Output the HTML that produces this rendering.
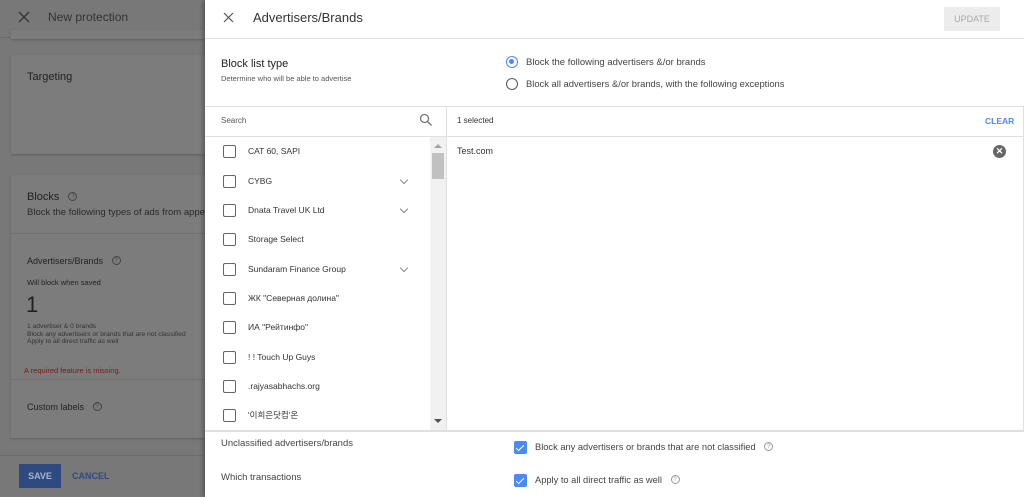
<!DOCTYPE html>
<html><head><meta charset="utf-8"><style>
*{box-sizing:border-box;margin:0;padding:0}
body{width:1024px;height:497px;overflow:hidden;position:relative;font-family:"Liberation Sans","Noto Sans CJK KR",sans-serif;background:#777;color:#222}
.abs{position:absolute}
.bg{left:0;top:0;width:205px;height:497px;background:#787878}
.card{background:#7c7c7c;box-shadow:0 1px 2px #5e5e5e}
.t{position:absolute;white-space:nowrap}
.panel{left:205px;top:0;width:819px;height:497px;background:#fff;box-shadow:-2px 0 4px rgba(0,0,0,.3)}
.hl{position:absolute;height:1px;background:#e0e0e0}
.vl{position:absolute;width:1px;background:#e0e0e0}
.cb{position:absolute;left:18px;width:13px;height:13px;border:1.5px solid #666;border-radius:2px}
.item{position:absolute;left:43px;font-size:8.5px;color:#333}
.chev{position:absolute;left:196px;width:6px;height:6px;border-right:1.2px solid #888;border-bottom:1.2px solid #888;transform:rotate(45deg)}
.bcb{position:absolute;width:13px;height:13px;background:#4a8af4;border-radius:2px}
.bcb:after{content:"";position:absolute;left:4px;top:1.5px;width:3px;height:7px;border-right:1.5px solid #fff;border-bottom:1.5px solid #fff;transform:rotate(45deg)}
.q{display:inline-block;width:9px;height:9px;border:1px solid #999;border-radius:50%;font-size:6px;text-align:center;line-height:8px;color:#999;vertical-align:2px;margin-left:6px}
</style></head><body>
<div class="abs bg"></div>
<svg class="abs" style="left:18px;top:11px" width="12" height="12" viewBox="0 0 12 12"><path d="M1 1L11 11M11 1L1 11" stroke="#333" stroke-width="1.3"/></svg>
<div class="t" style="left:48px;top:10px;font-size:12px;color:#333">New protection</div>
<div class="hl" style="left:0;top:37px;width:205px;background:#6c6c6c"></div>
<div class="abs card" style="left:11px;top:30px;width:194px;height:9px"></div>
<div class="abs card" style="left:11px;top:55px;width:194px;height:99px"></div>
<div class="t" style="left:27px;top:71px;font-size:11px;color:#222">Targeting</div>
<div class="abs card" style="left:11px;top:175px;width:194px;height:263px"></div>
<div class="t" style="left:27px;top:191px;font-size:11px;color:#222">Blocks <span class="q" style="border-color:#444;color:#444">?</span></div>
<div class="t" style="left:27px;top:207px;font-size:9.5px;color:#2a2a2a">Block the following types of ads from appearin</div>
<div class="hl" style="left:11px;top:233px;width:194px;background:#707070"></div>
<div class="t" style="left:27px;top:256px;font-size:9px;color:#222">Advertisers/Brands <span class="q" style="border-color:#444;color:#444">?</span></div>
<div class="t" style="left:27px;top:278px;font-size:7.5px;color:#222">Will block when saved</div>
<div class="t" style="left:26px;top:292px;font-size:22px;color:#222">1</div>
<div class="t" style="left:27px;top:323px;font-size:6.7px;color:#333;line-height:7.7px">1 advertiser &amp; 0 brands<br>Block any advertisers or brands that are not classified<br>Apply to all direct traffic as well</div>
<div class="t" style="left:24px;top:366px;font-size:7.5px;color:#7a1a1a">A required feature is missing.</div>
<div class="hl" style="left:11px;top:379px;width:194px;background:#707070"></div>
<div class="t" style="left:27px;top:402px;font-size:9px;color:#222">Custom labels <span class="q" style="border-color:#444;color:#444">?</span></div>
<div class="hl" style="left:0;top:455px;width:205px;background:#6c6c6c"></div>
<div class="abs" style="left:19px;top:464px;width:42px;height:24px;background:#2f4a80;color:#a8b4cc;font-size:9px;font-weight:bold;text-align:center;line-height:24px">SAVE</div>
<div class="t" style="left:72px;top:471px;font-size:9px;font-weight:bold;color:#2f4a80">CANCEL</div>

<div class="abs panel">
 <svg class="abs" style="left:18px;top:12px" width="11" height="11" viewBox="0 0 11 11"><path d="M1 1L10 10M10 1L1 10" stroke="#555" stroke-width="1.2"/></svg>
 <div class="t" style="left:48px;top:10px;font-size:13px;color:#333">Advertisers/Brands</div>
 <div class="abs" style="left:739px;top:7px;width:56px;height:24px;background:#ececec;color:#aaa;font-size:9px;text-align:center;line-height:24px">UPDATE</div>
 <div class="hl" style="left:0;top:38px;width:819px"></div>
 <div class="t" style="left:16px;top:58px;font-size:11px;color:#222">Block list type</div>
 <div class="t" style="left:16px;top:74px;font-size:7.5px;color:#555">Determine who will be able to advertise</div>
 <div class="abs" style="left:301px;top:56px;width:12px;height:12px;border:1.5px solid #4a8af4;border-radius:50%"><div class="abs" style="left:2px;top:2px;width:5px;height:5px;background:#4a8af4;border-radius:50%"></div></div>
 <div class="t" style="left:321px;top:57px;font-size:9.5px;color:#444">Block the following advertisers &amp;/or brands</div>
 <div class="abs" style="left:301px;top:78px;width:12px;height:12px;border:1.2px solid #555;border-radius:50%"></div>
 <div class="t" style="left:321px;top:78px;font-size:9.4px;color:#444">Block all advertisers &amp;/or brands, with the following exceptions</div>
 <div class="hl" style="left:0;top:106px;width:819px"></div>
 <div class="vl" style="left:818px;top:106px;height:325px"></div>
 <div class="vl" style="left:241px;top:106px;height:325px"></div>
 <div class="t" style="left:16px;top:116px;font-size:8px;color:#555">Search</div>
 <svg class="abs" style="left:214px;top:113px" width="14" height="14" viewBox="0 0 14 14"><circle cx="5.5" cy="5.5" r="4" fill="none" stroke="#777" stroke-width="1.3"/><path d="M8.5 8.5L12.5 12.5" stroke="#777" stroke-width="1.4"/></svg>
 <div class="t" style="left:252px;top:116px;font-size:8px;color:#333">1 selected</div>
 <div class="t" style="left:780px;top:116px;font-size:8.5px;font-weight:bold;color:#4a8af4">CLEAR</div>
 <div class="hl" style="left:0;top:136px;width:819px"></div>
 <div class="abs" style="left:225px;top:137px;width:16px;height:293px;background:#f1f1f1"></div>
 <div class="abs" style="left:227px;top:153px;width:12px;height:26px;background:#c1c1c1"></div>
 <div class="abs" style="left:229px;top:144px;width:0;height:0;border-left:4px solid transparent;border-right:4px solid transparent;border-bottom:4px solid #a3a3a3"></div>
 <div class="abs" style="left:229px;top:419px;width:0;height:0;border-left:4px solid transparent;border-right:4px solid transparent;border-top:4px solid #505050"></div>
 <div class="cb" style="top:145px"></div><div class="item" style="top:146px">CAT 60, SAPI</div>
 <div class="cb" style="top:175px"></div><div class="item" style="top:176px">CYBG</div><div class="chev" style="top:177px"></div>
 <div class="cb" style="top:204px"></div><div class="item" style="top:205px">Dnata Travel UK Ltd</div><div class="chev" style="top:206px"></div>
 <div class="cb" style="top:233px"></div><div class="item" style="top:234px">Storage Select</div>
 <div class="cb" style="top:263px"></div><div class="item" style="top:264px">Sundaram Finance Group</div><div class="chev" style="top:265px"></div>
 <div class="cb" style="top:292px"></div><div class="item" style="top:293px">ЖК "Северная долина"</div>
 <div class="cb" style="top:321px"></div><div class="item" style="top:322px">ИА "Рейтинфо"</div>
 <div class="cb" style="top:351px"></div><div class="item" style="top:352px">! ! Touch Up Guys</div>
 <div class="cb" style="top:380px"></div><div class="item" style="top:381px">.rajyasabhachs.org</div>
 <div class="cb" style="top:409px"></div><div class="item" style="top:409px">'이희은닷컴'온</div>
 <div class="t" style="left:252px;top:146px;font-size:9px;color:#333">Test.com</div>
 <div class="abs" style="left:788px;top:145px;width:13px;height:13px;background:#666;border-radius:50%;color:#fff;font-size:9px;line-height:13px;text-align:center;font-weight:bold">✕</div>
 <div class="hl" style="left:0;top:430px;width:819px;height:2px"></div>
 <div class="t" style="left:16px;top:438px;font-size:9.5px;color:#444">Unclassified advertisers/brands</div>
 <div class="t" style="left:16px;top:472px;font-size:9.5px;color:#444">Which transactions</div>
 <div class="bcb" style="left:309px;top:441px"></div>
 <div class="t" style="left:330px;top:442px;font-size:9.3px;color:#444">Block any advertisers or brands that are not classified <span class="q">?</span></div>
 <div class="bcb" style="left:309px;top:474px"></div>
 <div class="t" style="left:330px;top:475px;font-size:9.3px;color:#444">Apply to all direct traffic as well <span class="q">?</span></div>
</div>
</body></html>
